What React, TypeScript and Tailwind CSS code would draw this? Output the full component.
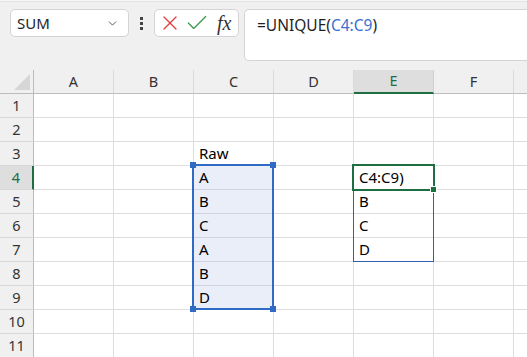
import { ChevronDown, X, Check } from 'lucide-react';

const cols = ['A', 'B', 'C', 'D', 'E', 'F', 'G'];
const rows = [1, 2, 3, 4, 5, 6, 7, 8, 9, 10, 11];

const cells: Record<string, string> = {
  C3: 'Raw',
  C4: 'A',
  C5: 'B',
  C6: 'C',
  C7: 'A',
  C8: 'B',
  C9: 'D',
  E4: 'C4:C9)',
  E5: 'B',
  E6: 'C',
  E7: 'D',
};

function Handle({ className }: { className: string }) {
  return <div className={`absolute w-[6px] h-[6px] bg-[#2f6bc4] ${className}`} />;
}

export default function App() {
  return (
    <div className="w-[527px] h-[357px] overflow-hidden bg-[#f0f0f0] font-['Noto_Sans',sans-serif] text-[#1f1f1f]">
      <div className="h-[2px] bg-[#f7f7f7] border-b border-[#e2e2e2]" />

      {/* formula bar */}
      <div className="h-[68px] flex items-start pt-[7px] pl-[10px]">
        <div className="w-[119px] h-[28px] bg-white border border-[#d4d4d4] rounded-[5px] flex items-center justify-between pl-[6px] pr-[9px]">
          <span className="text-[15px]">SUM</span>
          <ChevronDown className="w-[13px] h-[13px] text-[#444]" strokeWidth={1.6} />
        </div>
        <div className="w-[25px] h-[28px] flex flex-col items-center justify-center gap-[2px]">
          <span className="w-[3px] h-[3px] bg-[#444]" />
          <span className="w-[3px] h-[3px] bg-[#444]" />
          <span className="w-[3px] h-[3px] bg-[#444]" />
        </div>
        <div className="w-[85px] h-[28px] bg-white border border-[#d4d4d4] rounded-[5px] flex items-center pl-[3px]">
          <X className="w-[24px] h-[24px] text-[#e23b3b]" strokeWidth={1.2} />
          <Check className="ml-[2px] w-[26px] h-[26px] text-[#3c9c4c]" strokeWidth={1.2} />
          <span className="ml-[7px] font-['Liberation_Serif',serif] italic text-[20px] text-[#333] leading-none">fx</span>
        </div>
        <div className="ml-[5px] flex-1 h-[52px] bg-white border border-r-0 border-[#d4d4d4] rounded-l-[5px] pl-[12px] pt-[4px] text-[15.5px]">
          =UNIQUE(<span className="text-[#3b6fd1]">C4:C9</span>)
        </div>
      </div>

      {/* sheet */}
      <div className="relative">
        <div className="grid grid-cols-[34px_repeat(7,80px)] grid-rows-[24px_repeat(11,24px)]">
          <div className="relative border-r border-b border-[#bcbcbc] bg-[#f0f0f0]">
            <div className="absolute right-[3px] bottom-[3px] w-0 h-0 border-l-[16px] border-l-transparent border-b-[16px] border-b-[#d6d6d6]" />
          </div>
          {cols.map((c) => (
            <div
              key={c}
              className={`flex items-center justify-center text-[14.5px] border-r ${
                c === 'E'
                  ? 'bg-[#dedede] text-[#1e6e42] border-b-2 border-b-[#1e6e42] border-r-[#d0d0d0]'
                  : 'border-b border-[#bcbcbc] border-r-[#dadada] text-[#333]'
              }`}
            >
              {c === 'G' ? '' : c}
            </div>
          ))}
          {rows.map((r) => (
            <>
              <div
                key={`h${r}`}
                className={`flex items-center justify-center text-[14.5px] border-b border-b-[#d8d8d8] ${
                  r === 4
                    ? 'bg-[#dedede] text-[#1e6e42] border-r-2 border-r-[#1e6e42]'
                    : 'border-r border-r-[#bcbcbc] text-[#333]'
                }`}
              >
                {r}
              </div>
              {cols.map((c) => {
                const inRange = c === 'C' && r >= 4 && r <= 9;
                return (
                  <div
                    key={`${c}${r}`}
                    className={`flex items-center pl-[5px] text-[15px] text-black border-r border-b border-[#dedede] ${
                      inRange ? 'bg-[#e9eef8] border-b-[#cfd3da]' : 'bg-white'
                    }`}
                  >
                    {cells[`${c}${r}`]}
                  </div>
                );
              })}
            </>
          ))}
        </div>

        {/* C4:C9 selection */}
        <div className="absolute left-[192px] top-[94px] w-[82px] h-[146px] border-2 border-[#2f6bc4]" />
        <Handle className="left-[190px] top-[92px]" />
        <Handle className="left-[270px] top-[92px]" />
        <Handle className="left-[190px] top-[236px]" />
        <Handle className="left-[270px] top-[236px]" />

        {/* spill range */}
        <div className="absolute left-[353px] top-[95px] w-[81px] h-[97px] border border-[#2f5fb0]" />
        {/* active cell */}
        <div className="absolute left-[352px] top-[94px] w-[83px] h-[27px] border-2 border-[#1e6e42]" />
        <div className="absolute left-[430px] top-[116px] w-[7px] h-[7px] bg-[#1e6e42] border border-white" />
      </div>
    </div>
  );
}
